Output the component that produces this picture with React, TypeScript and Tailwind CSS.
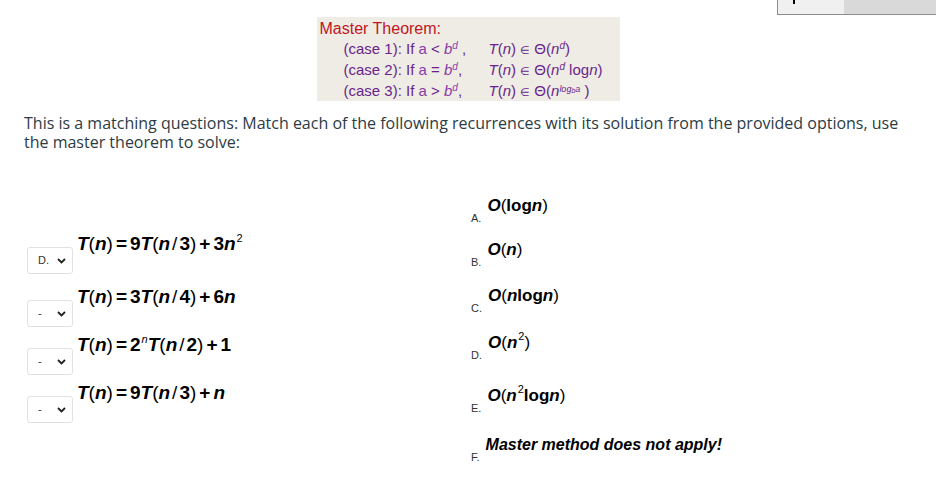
import React from "react";

const mathFont = { fontFamily: '"Liberation Sans", Arial, sans-serif' };

function Sel({ value }: { value: string }) {
  return (
    <div className="flex h-[27px] w-[46px] items-center justify-between rounded-[3px] border border-[#e2e2e2] bg-white pl-[10px] pr-[6px] text-[11px] text-[#333]">
      <span>{value}</span>
      <svg width="9" height="6" viewBox="0 0 9 6">
        <path d="M1 1l3.5 3.5L8 1" fill="none" stroke="#222" strokeWidth="1.8" />
      </svg>
    </div>
  );
}

const I = ({ children }: { children: React.ReactNode }) => <i className="font-bold">{children}</i>;
const P = ({ children }: { children: React.ReactNode }) => <span className="font-normal">{children}</span>;
const Op = ({ children }: { children: React.ReactNode }) => <span className="mx-[3px]">{children}</span>;
const Sl = () => <span className="mx-[2px] font-normal">/</span>;
const Sup = ({ children, italic }: { children: React.ReactNode; italic?: boolean }) => (
  <sup className={`relative -top-[8px] ml-[1px] text-[11px] font-normal ${italic ? "italic" : ""}`}>{children}</sup>
);

const questions: { sel: string; eq: React.ReactNode; mt: string }[] = [
  {
    sel: "D.",
    mt: "mt-0",
    eq: (
      <>
        <I>T</I><P>(</P><I>n</I><P>)</P><Op>=</Op>9<I>T</I><P>(</P><I>n</I><Sl />3<P>)</P><Op>+</Op>3<I>n</I>
        <Sup>2</Sup>
      </>
    ),
  },
  {
    sel: "-",
    mt: "mt-[13px]",
    eq: (
      <>
        <I>T</I><P>(</P><I>n</I><P>)</P><Op>=</Op>3<I>T</I><P>(</P><I>n</I><Sl />4<P>)</P><Op>+</Op>6<I>n</I>
      </>
    ),
  },
  {
    sel: "-",
    mt: "mt-[8px]",
    eq: (
      <>
        <I>T</I><P>(</P><I>n</I><P>)</P><Op>=</Op>2<Sup italic>n</Sup>
        <I>T</I><P>(</P><I>n</I><Sl />2<P>)</P><Op>+</Op>1
      </>
    ),
  },
  {
    sel: "-",
    mt: "mt-[8px]",
    eq: (
      <>
        <I>T</I><P>(</P><I>n</I><P>)</P><Op>=</Op>9<I>T</I><P>(</P><I>n</I><Sl />3<P>)</P><Op>+</Op><I>n</I>
      </>
    ),
  },
];

const answers: { l: string; body: React.ReactNode; mt: string }[] = [
  { l: "A.", mt: "mt-0", body: <><I>O</I><P>(</P>log<I>n</I><P>)</P></> },
  { l: "B.", mt: "mt-[16px]", body: <><I>O</I><P>(</P><I>n</I><P>)</P></> },
  { l: "C.", mt: "mt-[18px]", body: <><I>O</I><P>(</P><I>n</I>log<I>n</I><P>)</P></> },
  {
    l: "D.",
    mt: "mt-[19px]",
    body: <><I>O</I><P>(</P><I>n</I><Sup>2</Sup><P>)</P></>,
  },
  {
    l: "E.",
    mt: "mt-[25px]",
    body: <><I>O</I><P>(</P><I>n</I><Sup>2</Sup>log<I>n</I><P>)</P></>,
  },
  { l: "F.", mt: "mt-[21px]", body: <i className="text-[16px] font-bold">Master method does not apply!</i> },
];

export default function App() {
  return (
    <div className="relative h-[490px] w-[936px] overflow-hidden bg-white">
      {/* top-right toolbar fragment */}
      <div className="absolute right-0 top-0 flex h-[15px] w-[159px] border-b border-l border-[#8c8c8c]">
        <div className="relative w-[66px] bg-[#f0f0f0]">
          <span className="absolute left-[15px] top-0 h-[4px] w-[2px] bg-black" />
        </div>
        <div className="flex-1 bg-[#d9d9d9]" />
      </div>

      <div className="flex justify-center pt-[17px]">
        <div
          className="h-[84px] w-[303px] bg-[#eeece4] pl-[3px] pt-[2px] text-[15px] leading-[20px]"
          style={mathFont}
        >
          <div className="text-[16px] text-[#c0161e]">Master Theorem:</div>
          <div className="grid grid-cols-[145px_1fr] pl-[24px] text-[#6a1f8c]">
            <div>(case 1): If <span className="text-[#8a3aa8]">a</span> &lt; <i className="text-[#8a3aa8]">b<sup className="text-[10px]">d</sup></i> ,</div>
            <div><i>T</i>(<i>n</i>) <span className="text-[11px]">∈</span> Θ(<i>n<sup className="text-[10px]">d</sup></i>)</div>
            <div>(case 2): If <span className="text-[#8a3aa8]">a</span> = <i className="text-[#8a3aa8]">b<sup className="text-[10px]">d</sup></i>,</div>
            <div><i>T</i>(<i>n</i>) <span className="text-[11px]">∈</span> Θ(<i>n<sup className="text-[10px]">d</sup></i> log<i>n</i>)</div>
            <div>(case 3): If <span className="text-[#8a3aa8]">a</span> &gt; <i className="text-[#8a3aa8]">b<sup className="text-[10px]">d</sup></i>,</div>
            <div><i>T</i>(<i>n</i>) <span className="text-[11px]">∈</span> Θ(<i>n<sup className="text-[9px]">log<sub className="text-[7px]">b</sub>a</sup></i> )</div>
          </div>
        </div>
      </div>

      <p
        className="mt-[13px] pl-[24px] pr-[20px] text-[16px] leading-[19px] text-[#2d3b45]"
        style={{ fontFamily: '"Open Sans", sans-serif' }}
      >
        This is a matching questions: Match each of the following recurrences with its solution from the provided options, use
        the master theorem to solve:
      </p>

      <div className="flex pl-[27px]" style={mathFont}>
        <div className="w-[444px] pt-[82px]">
          {questions.map((q, i) => (
            <div key={i} className={`flex items-start ${q.mt}`}>
              <div className="pt-[13px]">
                <Sel value={q.sel} />
              </div>
              <div className="ml-[4px] text-[19px] font-bold leading-[20px] text-black">{q.eq}</div>
            </div>
          ))}
        </div>
        <div className="pt-[44px]">
          {answers.map((a, i) => (
            <div key={i} className={`flex items-start ${a.mt}`}>
              <span className="pt-[16px] text-[11px] leading-[12px] text-[#333]">{a.l}</span>
              <span className="ml-[6px] text-[17px] font-bold leading-[20px] text-black">{a.body}</span>
            </div>
          ))}
        </div>
      </div>
    </div>
  );
}
